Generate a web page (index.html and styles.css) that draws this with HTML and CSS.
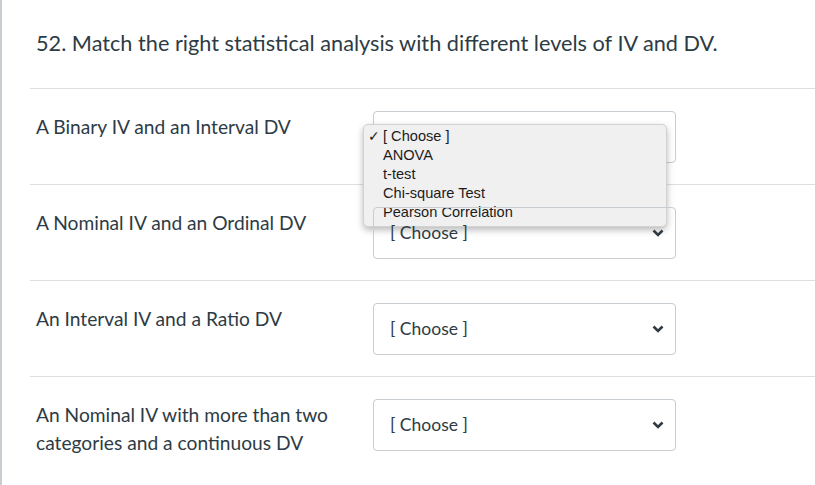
FILE: index.html
```html
<!DOCTYPE html>
<html>
<head>
<meta charset="utf-8">
<link rel="stylesheet" href="styles.css">
</head>
<body>
<div class="page">
  <div class="title">52. Match the right statistical analysis with different levels of IV and DV.</div>
  <div class="rows">
    <div class="row">
      <div class="label">A Binary IV and an Interval DV</div>
      <div class="select">
        <span class="value">[ Choose ]</span>
        <svg class="chev" width="12" height="8" viewBox="0 0 12 8"><path d="M1.5 1.5 L6 6 L10.5 1.5" fill="none" stroke="#2d3b45" stroke-width="2.6"/></svg>
        <div class="menu">
          <div class="item checked"><span class="check">✓</span>[ Choose ]</div>
          <div class="item">ANOVA</div>
          <div class="item">t-test</div>
          <div class="item">Chi-square Test</div>
          <div class="item">Pearson Correlation</div>
        </div>
      </div>
    </div>
    <div class="row">
      <div class="label">A Nominal IV and an Ordinal DV</div>
      <div class="select">
        <span class="value">[ Choose ]</span>
        <svg class="chev" width="12" height="8" viewBox="0 0 12 8"><path d="M1.5 1.5 L6 6 L10.5 1.5" fill="none" stroke="#2d3b45" stroke-width="2.6"/></svg>
      </div>
    </div>
    <div class="row">
      <div class="label">An Interval IV and a Ratio DV</div>
      <div class="select">
        <span class="value">[ Choose ]</span>
        <svg class="chev" width="12" height="8" viewBox="0 0 12 8"><path d="M1.5 1.5 L6 6 L10.5 1.5" fill="none" stroke="#2d3b45" stroke-width="2.6"/></svg>
      </div>
    </div>
    <div class="row">
      <div class="label">An Nominal IV with more than two categories and a continuous DV</div>
      <div class="select">
        <span class="value">[ Choose ]</span>
        <svg class="chev" width="12" height="8" viewBox="0 0 12 8"><path d="M1.5 1.5 L6 6 L10.5 1.5" fill="none" stroke="#2d3b45" stroke-width="2.6"/></svg>
      </div>
    </div>
  </div>
</div>
</body>
</html>
```
FILE: styles.css
```css
html, body {
  margin: 0;
  padding: 0;
  background: #fff;
}
body {
  font-family: Lato, "Liberation Sans", sans-serif;
  color: #2d3b45;
}
.page {
  border-left: 2px solid #c7cdd1;
  padding-left: 28px;
  min-height: 485px;
  box-sizing: border-box;
}
.title {
  font-size: 21.7px;
  line-height: 30px;
  padding: 28px 0 0 6px;
  height: 88px;
  box-sizing: border-box;
}
.row {
  display: flex;
  align-items: flex-start;
  border-top: 1px solid #dcdfe2;
  padding: 22px 0 21px 6px;
}
.label {
  flex: 0 0 312px;
  padding-right: 25px;
  font-size: 19.2px;
  line-height: 28px;
  padding-top: 2px;
}
.select {
  position: relative;
  width: 303px;
  height: 52px;
  box-sizing: border-box;
  border: 1px solid #c7cdd1;
  border-radius: 4px;
  display: flex;
  align-items: center;
  justify-content: space-between;
  padding: 0 11px 0 16px;
  font-size: 17.5px;
}
.value {
  line-height: 20px;
}
.chev {
  display: block;
}
.menu {
  position: absolute;
  left: -11px;
  top: 12px;
  width: 304px;
  box-sizing: border-box;
  background: #f0f0f0;
  border: 1px solid #d2d2d2;
  border-radius: 5px;
  box-shadow: 0 3px 7px rgba(0, 0, 0, 0.28);
  padding: 2px 0 4px;
  font-family: "Liberation Sans", Arial, sans-serif;
  font-size: 14.6px;
  color: #1c1c1c;
}
.item {
  position: relative;
  line-height: 19px;
  padding-left: 19px;
}
.check {
  position: absolute;
  left: 4px;
  top: 0;
  font-family: "DejaVu Sans", sans-serif;
  font-size: 14px;
}
```
